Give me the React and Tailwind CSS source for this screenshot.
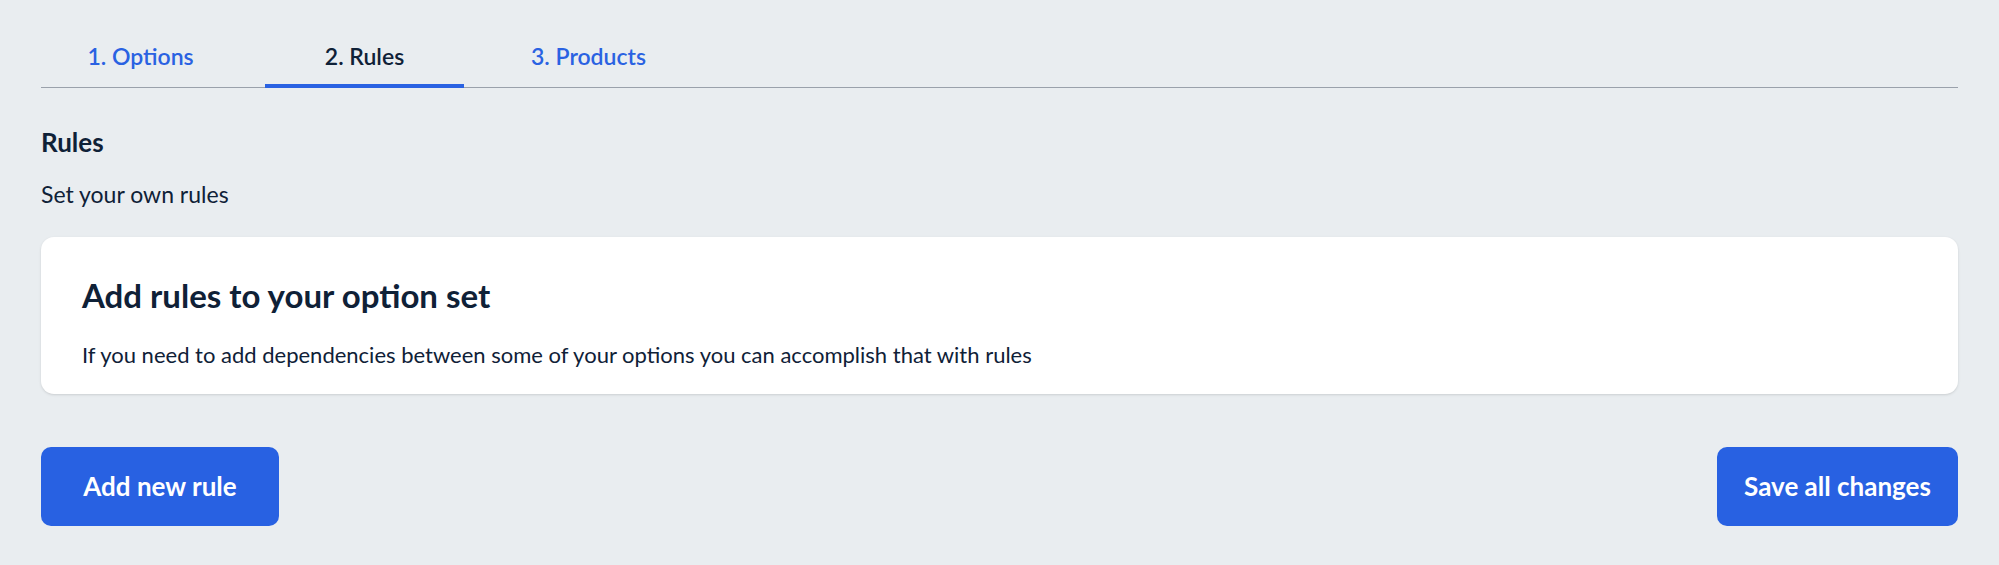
import { useState } from 'react';

const TABS = ['1. Options', '2. Rules', '3. Products'];

export default function App() {
  const [active, setActive] = useState(1);

  return (
    <div
      className="min-h-[565px] bg-[#e9edf0] px-[41px] text-[#0f2137]"
      style={{ fontFamily: 'Lato, "Open Sans", sans-serif' }}
    >
      {/* Tabs */}
      <nav className="flex gap-[25px] border-b border-[#9aa1ab]">
        {TABS.map((tab, i) => (
          <button
            key={tab}
            onClick={() => setActive(i)}
            className={`w-[199px] h-[88px] -mb-px pt-[43px] border-b-[4px] text-[23px] leading-[26px] font-semibold flex justify-center items-start ${
              active === i
                ? 'border-[#2a62e2] text-[#0f2137]'
                : 'border-transparent text-[#2a62e2]'
            }`}
          >
            {tab}
          </button>
        ))}
      </nav>

      {/* Header */}
      <h2 className="mt-[35px] text-[26px] leading-[38px] font-bold">Rules</h2>
      <p className="mt-[17px] text-[23px] leading-[32px]">Set your own rules</p>

      {/* Card */}
      <div className="mt-[27px] h-[157px] bg-white rounded-[13px] shadow-sm px-[41px] pt-[38px]">
        <h3 className="text-[33px] leading-[40px] font-bold">Add rules to your option set</h3>
        <p className="mt-[25px] text-[22px] leading-[30px]">
          If you need to add dependencies between some of your options you can accomplish that with rules
        </p>
      </div>

      {/* Actions */}
      <div className="mt-[53px] flex justify-between">
        <button className="h-[79px] w-[238px] rounded-[10px] bg-[#2861e2] text-white text-[26px] font-bold">
          Add new rule
        </button>
        <button className="h-[79px] w-[241px] rounded-[10px] bg-[#2861e2] text-white text-[26px] font-bold">
          Save all changes
        </button>
      </div>
    </div>
  );
}
